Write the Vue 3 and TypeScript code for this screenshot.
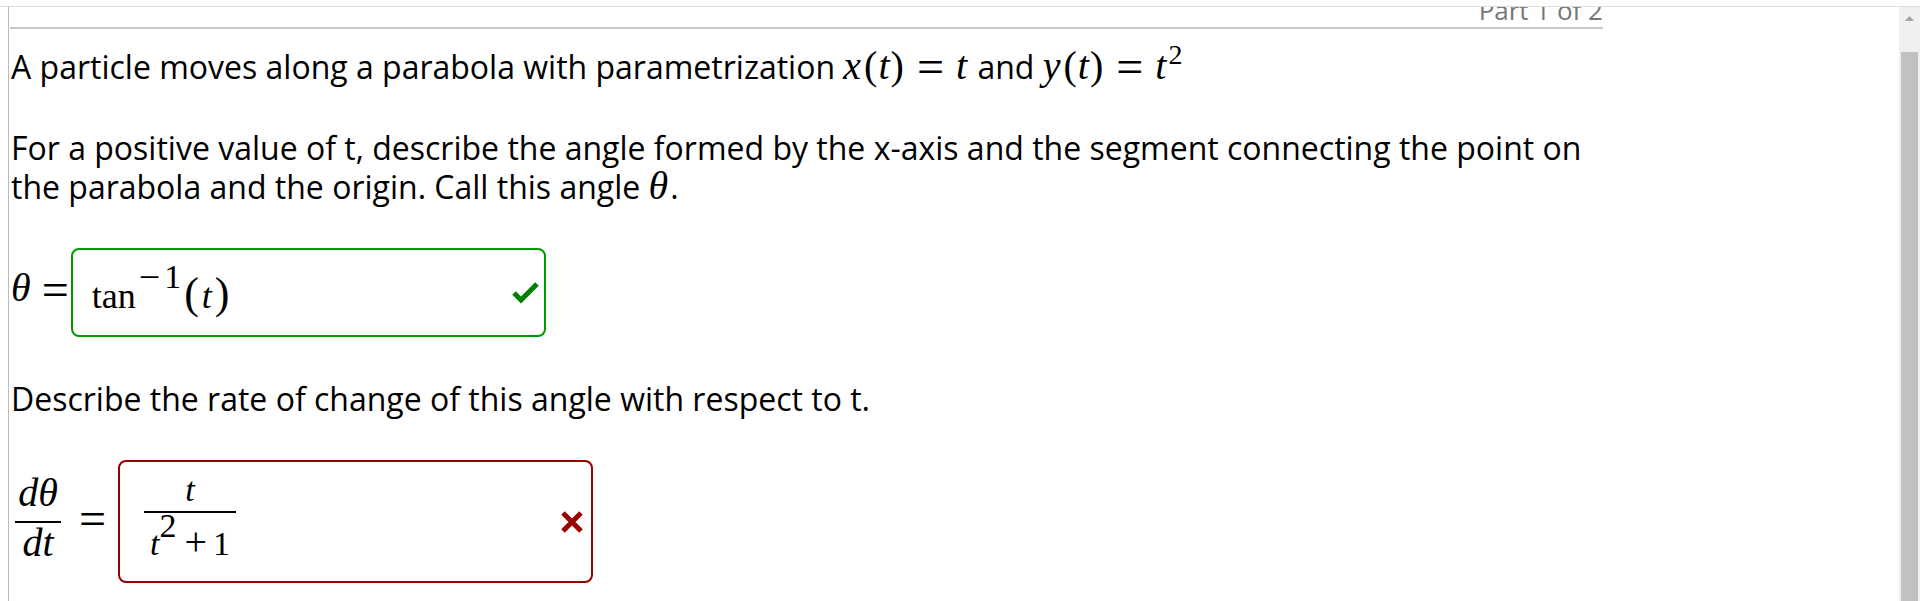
<script setup lang="ts">
const part = 1
const total = 2
</script>

<template>
  <div class="page">
    <main class="pane">
      <div class="question">
        <header class="progress">Part {{ part }} of {{ total }}</header>

        <p class="intro">
          A particle moves along a parabola with parametrization
          <span class="math"><i class="sym">x</i><span class="paren">(</span><i>t</i><span class="paren">)</span><span class="eq rel">=</span><i class="sym">t</i></span>
          and
          <span class="math"><i class="sym">y</i><span class="paren">(</span><i>t</i><span class="paren">)</span><span class="eq rel">=</span><i class="sym">t</i><span class="power">2</span></span>
        </p>

        <p>
          For a positive value of t, describe the angle formed by the x-axis and the segment
          connecting the point on the parabola and the origin. Call this angle
          <span class="math"><i class="sym">θ</i></span>.
        </p>

        <section class="row">
          <span class="label"><i>θ</i></span>
          <span class="label eq near">=</span>
          <div class="answer correct" role="group" aria-label="Answer for theta, correct">
            <div class="formula inverse">
              tan<span class="exponent"><span class="minus">−</span>1</span><span class="tall">(</span><i>t</i><span class="tall">)</span>
            </div>
            <svg class="mark" width="27" height="22" viewBox="0 0 27 22" aria-hidden="true">
              <path d="M2 11 L9 18 L25 2" fill="none" stroke="#008000" stroke-width="5" />
            </svg>
          </div>
        </section>

        <p>Describe the rate of change of this angle with respect to t.</p>

        <section class="row">
          <div class="derivative">
            <i class="over">dθ</i>
            <i class="under">dt</i>
          </div>
          <span class="label eq far">=</span>
          <div class="answer wrong" role="group" aria-label="Answer for the derivative, incorrect">
            <div class="formula quotient">
              <i class="top">t</i>
              <span class="bottom"><i>t</i><span class="square">2</span><span class="plus">+</span>1</span>
            </div>
            <svg class="mark" width="22" height="22" viewBox="0 0 22 22" aria-hidden="true">
              <path d="M2 2 L20 20 M20 2 L2 20" fill="none" stroke="#990000" stroke-width="5" />
            </svg>
          </div>
        </section>
      </div>
    </main>
    <div class="scrollbar" aria-hidden="true">
      <svg width="9" height="5" viewBox="0 0 9 5"><path d="M0 5 L4.5 0 L9 5 Z" fill="#a3a3a3" /></svg>
      <div class="thumb"></div>
    </div>
  </div>
</template>

<style>
body {
  margin: 0;
  background: #fff;
}
</style>

<style scoped>
.page {
  box-sizing: border-box;
  height: 100vh;
  padding-top: 6px;
  display: flex;
  overflow: hidden;
  background: linear-gradient(#ddd, #ddd) 0 6px / 100% 1px no-repeat;
  color: #000;
  font: 32px/39px "Open Sans", "Noto Sans", sans-serif;
}
.pane {
  flex: 1;
  margin-left: 8px;
  border-left: 1px solid #bbb;
  border-top: 1px solid #ddd;
  padding: 0 2px 0 1px;
  overflow: hidden;
}
.question {
  max-width: 1593px;
  display: flex;
  flex-direction: column;
  gap: 42px;
}
.progress {
  height: 20px;
  display: flex;
  align-items: flex-end;
  justify-content: flex-end;
  border-bottom: 2px solid #c8c8c8;
  font-size: 26px;
  line-height: 34px;
  color: #777;
  margin-bottom: -24px;
}
p {
  margin: 0;
  padding-left: 1px;
}
.math,
.row {
  font-family: "Liberation Serif", "Times New Roman", serif;
  font-size: 40px;
}
.math {
  line-height: 0;
  white-space: nowrap;
}
.sym {
  margin-right: 2px;
}
.paren {
  margin: 0 1px;
}
.eq {
  font-size: 48px;
}
.rel {
  margin: 0 12px;
  line-height: 0;
  vertical-align: -4px;
}
.power {
  font-size: 28px;
  vertical-align: 15px;
}
.row {
  display: flex;
  align-items: center;
  padding-left: 1px;
}
.label {
  padding-bottom: 10px;
}
.label.eq {
  padding-bottom: 6px;
}
.near {
  margin-left: 11px;
}
.far {
  margin: 0 12px 0 18px;
}
.answer {
  box-sizing: border-box;
  width: 475px;
  border: 2px solid;
  border-radius: 8px;
  display: flex;
  align-items: center;
  justify-content: space-between;
}
.correct {
  min-height: 89px;
  padding: 0 5px 0 19px;
  margin-left: 2px;
  border-color: #009900;
}
.wrong {
  min-height: 123px;
  padding: 0 8px 0 24px;
  border-color: #990000;
}
.formula {
  line-height: 43px;
}
.inverse {
  font-size: 36px;
  padding-top: 8px;
}
.exponent {
  font-size: 34px;
  line-height: 0;
  vertical-align: 20px;
}
.minus {
  font-size: 38px;
  vertical-align: -2px;
  margin: 0 4px 0 3px;
}
.tall {
  font-size: 44px;
  line-height: 0;
  margin: 0 3px;
}
.derivative,
.quotient {
  display: flex;
  flex-direction: column;
  text-align: center;
}
.derivative {
  margin-left: 4px;
  width: 46px;
  line-height: 40px;
}
.over {
  padding-bottom: 8px;
  border-bottom: 2px solid #000;
}
.under {
  padding-bottom: 8px;
}
.quotient {
  font-size: 34px;
  padding-bottom: 10px;
}
.top {
  border-bottom: 2px solid #000;
}
.bottom {
  padding: 9px 6px 0;
}
.square {
  line-height: 0;
  vertical-align: 18px;
}
.plus {
  font-size: 40px;
  line-height: 0;
  margin: 0 6px 0 8px;
}
.mark {
  flex: none;
}
.scrollbar {
  box-sizing: border-box;
  width: 21px;
  margin-top: 1px;
  padding: 9px 2px 0;
  background: #f0f0f0;
  display: flex;
  flex-direction: column;
  align-items: center;
  gap: 31px;
}
.scrollbar svg {
  flex: none;
}
.thumb {
  flex: 1;
  align-self: stretch;
  background: #c1c1c1;
}
</style>
